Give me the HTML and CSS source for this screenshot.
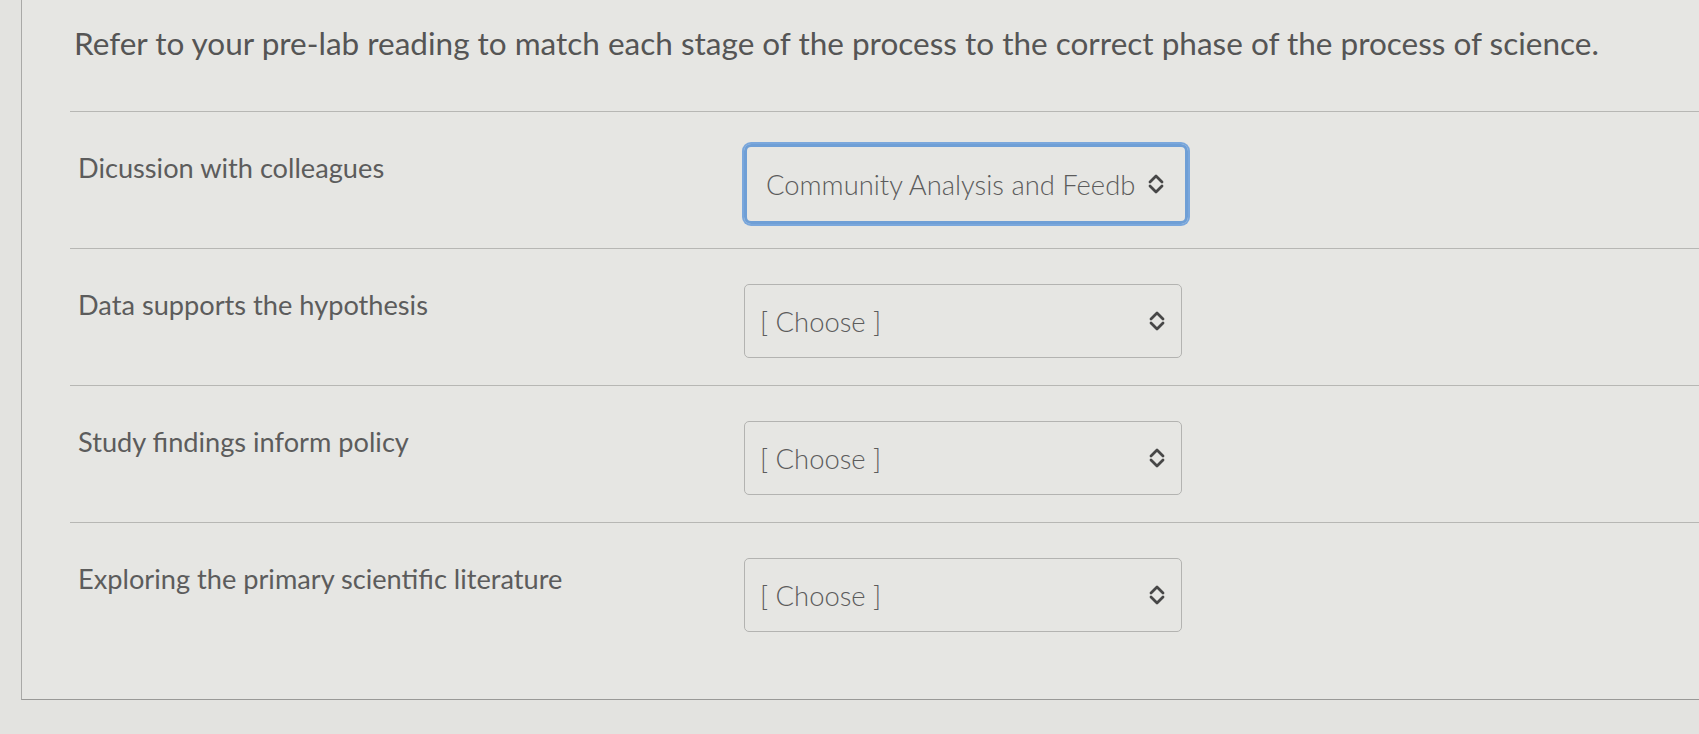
FILE: index.html
```html
<!DOCTYPE html>
<html>
<head>
<meta charset="utf-8">
<link rel="stylesheet" href="styles.css">
</head>
<body>
<div class="panel">
  <div class="title">Refer to your pre-lab reading to match each stage of the process to the correct phase of the process of science.</div>
  <div class="rows">
    <div class="row">
      <div class="label">Dicussion with colleagues</div>
      <div class="select focused">
        <span class="value">Community Analysis and Feedb</span>
        <svg class="arrows" width="18" height="24" viewBox="0 0 18 24"><path d="M3 10 L9 4 L15 10 M3 14 L9 20 L15 14" fill="none" stroke="#474747" stroke-width="2.8" stroke-linecap="round" stroke-linejoin="round"/></svg>
      </div>
    </div>
    <div class="row">
      <div class="label">Data supports the hypothesis</div>
      <div class="select">
        <span class="value">[ Choose ]</span>
        <svg class="arrows" width="18" height="24" viewBox="0 0 18 24"><path d="M3 10 L9 4 L15 10 M3 14 L9 20 L15 14" fill="none" stroke="#474747" stroke-width="2.8" stroke-linecap="round" stroke-linejoin="round"/></svg>
      </div>
    </div>
    <div class="row">
      <div class="label">Study findings inform policy</div>
      <div class="select">
        <span class="value">[ Choose ]</span>
        <svg class="arrows" width="18" height="24" viewBox="0 0 18 24"><path d="M3 10 L9 4 L15 10 M3 14 L9 20 L15 14" fill="none" stroke="#474747" stroke-width="2.8" stroke-linecap="round" stroke-linejoin="round"/></svg>
      </div>
    </div>
    <div class="row">
      <div class="label">Exploring the primary scientific literature</div>
      <div class="select">
        <span class="value">[ Choose ]</span>
        <svg class="arrows" width="18" height="24" viewBox="0 0 18 24"><path d="M3 10 L9 4 L15 10 M3 14 L9 20 L15 14" fill="none" stroke="#474747" stroke-width="2.8" stroke-linecap="round" stroke-linejoin="round"/></svg>
      </div>
    </div>
  </div>
</div>
</body>
</html>
```

FILE: styles.css
```css
html, body {
  margin: 0;
  padding: 0;
  height: 100%;
}
body {
  background: #e3e3e0;
  font-family: Lato, "Open Sans", "Liberation Sans", sans-serif;
  color: #555555;
  overflow: hidden;
}
.panel {
  margin-left: 21px;
  height: 700px;
  box-sizing: border-box;
  border-left: 1px solid #a9a9a7;
  border-bottom: 1.5px solid #999997;
  background: #e6e6e3;
}
.title {
  padding: 25px 0 50px 52px;
  font-size: 31.5px;
  line-height: 36px;
  color: #555555;
  white-space: nowrap;
}
.rows {
  margin-left: 48px;
}
.row {
  display: flex;
  height: 137px;
  box-sizing: border-box;
  border-top: 1.5px solid #b7b7b4;
  padding-left: 8px;
}
.label {
  width: 666px;
  padding-top: 40px;
  font-size: 27.2px;
  line-height: 32px;
  color: #5c5c5c;
}
.select {
  margin-top: 35px;
  width: 438px;
  height: 74px;
  box-sizing: border-box;
  border: 1.5px solid #b3b3b1;
  border-radius: 5px;
  display: flex;
  align-items: center;
  justify-content: space-between;
  padding: 0 15px 0 15px;
  font-size: 27.4px;
  font-weight: 300;
  color: #5c5c5c;
}
.select.focused {
  border: 3px solid #6f9fd6;
  box-shadow: 0 0 0 2px #7aa7dc;
  border-radius: 7px;
  margin-top: 32px;
  height: 80px;
  width: 444px;
  padding: 0 20px 0 19px;
}
.value {
  white-space: nowrap;
}
.arrows {
  flex: none;
}
```
